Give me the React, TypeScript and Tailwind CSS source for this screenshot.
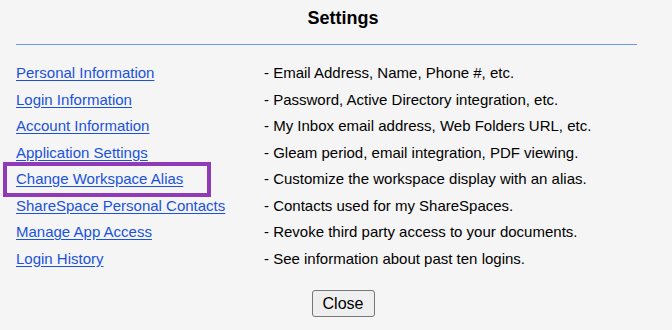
const rows: [string, string][] = [
  ['Personal Information', '- Email Address, Name, Phone #, etc.'],
  ['Login Information', '- Password, Active Directory integration, etc.'],
  ['Account Information', '- My Inbox email address, Web Folders URL, etc.'],
  ['Application Settings', '- Gleam period, email integration, PDF viewing.'],
  ['Change Workspace Alias', '- Customize the workspace display with an alias.'],
  ['ShareSpace Personal Contacts', '- Contacts used for my ShareSpaces.'],
  ['Manage App Access', '- Revoke third party access to your documents.'],
  ['Login History', '- See information about past ten logins.'],
];

export default function App() {
  return (
    <div
      className="relative w-[672px] h-[330px] overflow-hidden bg-[#f5f5f5] text-black"
      style={{ fontFamily: '"Liberation Sans", Arial, sans-serif' }}
    >
      <h1 className="pl-[14px] pt-[7px] text-center text-[18px] font-bold leading-[22px]">Settings</h1>

      <div className="ml-[16px] mt-[15px] w-[621px] h-px bg-[#6b97ec]" />

      <div className="mt-[15px] pl-[16px]">
        {rows.map(([link, desc]) => (
          <div key={link} className="flex h-[26.5px] items-center text-[15px] leading-[26.5px]">
            <a href="#" className="w-[248px] text-[#1a52dc] underline underline-offset-[2px]">
              {link}
            </a>
            <span>{desc}</span>
          </div>
        ))}
      </div>

      {/* highlight annotation */}
      <div className="absolute left-[3px] top-[162px] w-[208px] h-[35px] border-[4px] border-[#8f3ab6]" />

      <div className="mt-[18px] pl-[14px] flex justify-center">
        <button className="h-[27px] w-[63px] rounded-[3px] border border-[#767676] bg-[#efefef] text-[16px] leading-none text-black">
          Close
        </button>
      </div>
    </div>
  );
}
